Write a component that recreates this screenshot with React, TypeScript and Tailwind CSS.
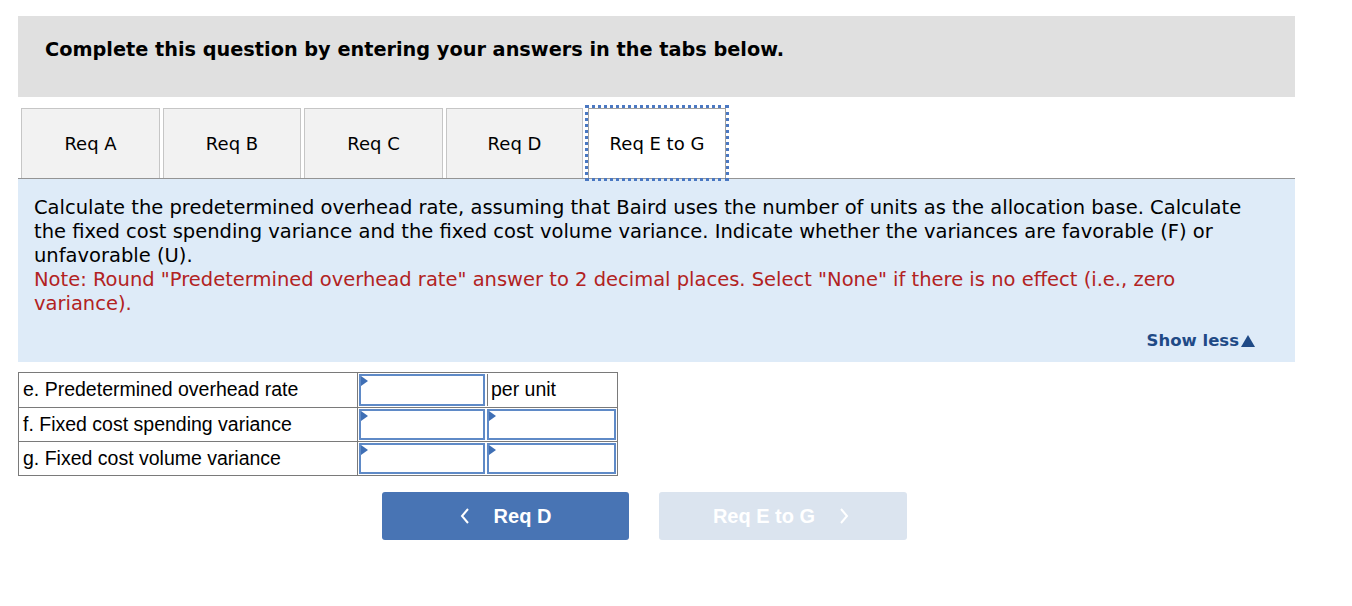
const tabs = [
  { label: 'Req A', w: 'w-[139px]' },
  { label: 'Req B', w: 'w-[138px]' },
  { label: 'Req C', w: 'w-[139px]' },
  { label: 'Req D', w: 'w-[137px]' },
];

const rows = [
  { label: 'e. Predetermined overhead rate', unit: true },
  { label: 'f. Fixed cost spending variance', unit: false },
  { label: 'g. Fixed cost volume variance', unit: false },
];

function AnswerBox() {
  return (
    <div className="relative h-full w-full border-2 border-[#5f8ac7] bg-white">
      <span className="absolute left-0 top-0 h-0 w-0 border-y-[5px] border-l-[7px] border-y-transparent border-l-[#3f6fb5]" />
    </div>
  );
}

export default function App() {
  return (
    <div className="min-h-[606px] w-[1352px] bg-white pt-4 pl-[18px] font-['DejaVu_Sans',Verdana,sans-serif] text-black">
      <div className="w-[1277px]">
        <div className="flex h-[81px] items-center bg-[#e0e0e0] px-[27px] pb-[12px] text-[19.3px] font-bold">
          Complete this question by entering your answers in the tabs below.
        </div>

        <div className="mt-[11px] flex h-[70px] items-stretch gap-[3px] pl-[3px]">
          {tabs.map((t) => (
            <div
              key={t.label}
              className={`flex ${t.w} items-center justify-center border border-b-0 border-[#c6c6c6] bg-[#f2f2f2] text-[18px]`}
            >
              {t.label}
            </div>
          ))}
          <div className="relative ml-[2px] flex w-[138px] items-center justify-center border border-b-0 border-[#a0a0a0] bg-white text-[18px] outline-[3px] outline-offset-0 outline-dotted outline-[#4a78c2]">
            Req E to G
          </div>
        </div>

        <div className="flex h-[184px] flex-col border-t border-[#949494] bg-[#deebf8] pl-4 pr-[40px] pt-[17px] pb-[9px] text-[19.5px] leading-[24px]">
          <p>
            Calculate the predetermined overhead rate, assuming that Baird uses the number of units as the allocation base. Calculate the fixed cost spending variance and the fixed cost volume variance. Indicate whether the variances are favorable (F) or unfavorable (U).
          </p>
          <p className="text-[#b22222]">
            Note: Round "Predetermined overhead rate" answer to 2 decimal places. Select "None" if there is no effect (i.e., zero variance).
          </p>
          <div className="mt-auto flex justify-end">
            <span className="flex items-center gap-[2px] text-[16.5px] font-bold text-[#1f4a86]">
              Show less
              <svg width="14" height="12" viewBox="0 0 14 12">
                <path d="M7 0L14 12H0Z" fill="#1f4a86" />
              </svg>
            </span>
          </div>
        </div>

        <div className="mt-[10px] w-[600px] border border-[#7a7a7a] font-['Liberation_Sans',Arial,sans-serif] text-[19.5px]">
          {rows.map((r, i) => (
            <div key={r.label} className={`flex h-[34px] ${i > 0 ? 'border-t border-[#7a7a7a]' : ''}`}>
              <div className="flex w-[339px] items-center border-r border-[#7a7a7a] pl-[4px]">{r.label}</div>
              <div className="w-[128px] p-px">
                <AnswerBox />
              </div>
              <div className="flex-1 p-px">
                {r.unit ? (
                  <div className="flex h-full items-center border-l border-[#7a7a7a] pl-[3px]">per unit</div>
                ) : (
                  <AnswerBox />
                )}
              </div>
            </div>
          ))}
        </div>

        <div className="mt-4 flex gap-[30px] pl-[364px] font-['Liberation_Sans',Arial,sans-serif] text-[20px] font-bold text-white">
          <button className="flex h-[48px] w-[247px] items-center justify-center gap-[24px] rounded-[3px] bg-[#4874b4]">
            <svg width="10" height="16" viewBox="0 0 10 16">
              <path d="M8 1L2 8l6 7" fill="none" stroke="white" strokeWidth="2" />
            </svg>
            Req D
          </button>
          <button className="flex h-[48px] w-[248px] items-center justify-center gap-[24px] rounded-[3px] bg-[#dbe4ef] pr-[4px]">
            Req E to G
            <svg width="10" height="16" viewBox="0 0 10 16">
              <path d="M2 1l6 7-6 7" fill="none" stroke="white" strokeWidth="2" />
            </svg>
          </button>
        </div>
      </div>
    </div>
  );
}
